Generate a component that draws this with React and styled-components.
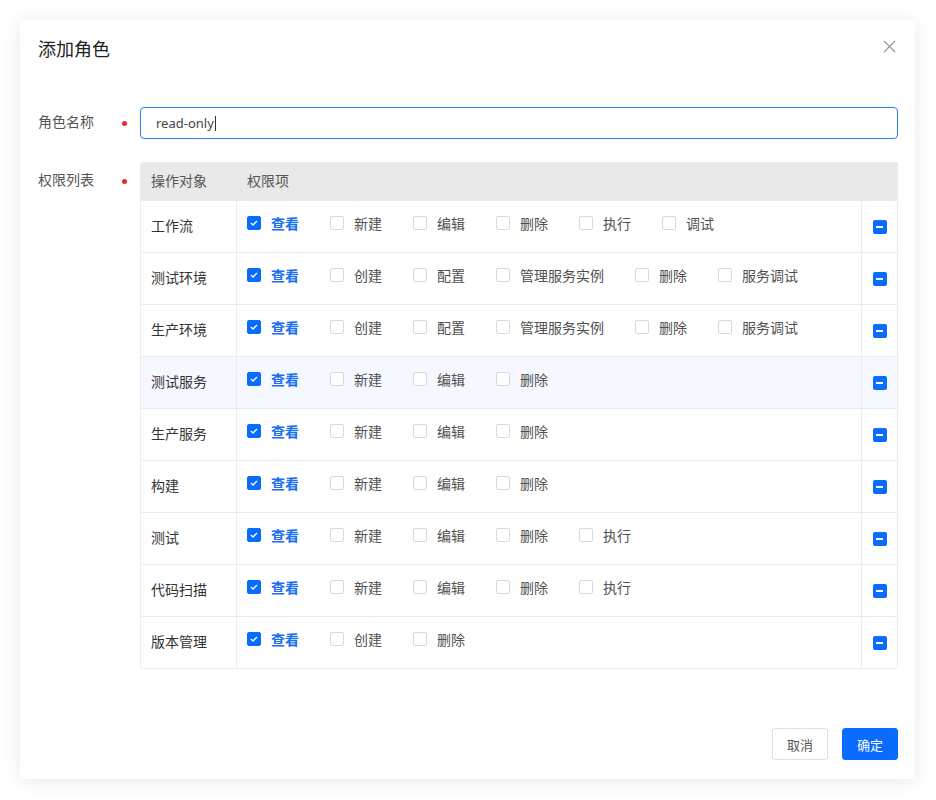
import React from "react";
import styled, { createGlobalStyle } from "styled-components";

const GlobalStyle = createGlobalStyle`
  body {
    margin: 0;
    background: #ffffff;
    font-family: "Noto Sans", "Noto Sans CJK SC", sans-serif;
    color: #333;
  }
`;

const BLUE = "#0a6cff";

const Page = styled.div`
  padding: 20px 21px 21px 20px;
`;

const Dialog = styled.div`
  height: 759px;
  background: #fff;
  box-shadow: 0 2px 18px rgba(0, 0, 0, 0.09);
  display: flex;
  flex-direction: column;
`;

const Header = styled.div`
  height: 56px;
  padding: 0 18px 2px;
  display: flex;
  align-items: center;
  justify-content: space-between;

  h2 {
    margin: 0;
    font-size: 18px;
    font-weight: 400;
    color: #222;
    font-family: "Noto Sans CJK SC", sans-serif;
  }
`;

const Close = styled.button`
  border: none;
  background: none;
  padding: 0;
  width: 14px;
  height: 14px;
  cursor: pointer;
  display: flex;
  margin-bottom: 3px;
  svg {
    display: block;
  }
`;

const Body = styled.div`
  flex: 1;
  padding: 29px 17px 0 18px;
  display: flex;
  flex-direction: column;
  gap: 23px;
`;

const FormRow = styled.div`
  display: flex;
  align-items: ${(p) => (p.$top ? "flex-start" : "center")};
`;

const Label = styled.div`
  width: 102px;
  flex-shrink: 0;
  position: relative;
  font-size: 14px;
  color: #555;
  font-family: "Noto Sans CJK SC", sans-serif;
  line-height: ${(p) => (p.$top ? "34px" : "20px")};
  padding-bottom: ${(p) => (p.$top ? "0" : "4px")};

  &::after {
    content: "";
    position: absolute;
    right: 13px;
    top: ${(p) => (p.$top ? "19px" : "12px")};
    width: 5px;
    height: 5px;
    margin-top: -2px;
    border-radius: 50%;
    background: #f5222d;
  }
`;

const InputBox = styled.div`
  flex: 1;
  height: 32px;
  box-sizing: border-box;
  border: 1px solid #2f7cf6;
  border-radius: 4px;
  padding: 0 15px;
  display: flex;
  align-items: center;
  font-size: 13px;
  color: #444;
`;

const Caret = styled.span`
  display: inline-block;
  width: 1px;
  height: 15px;
  background: #333;
  margin-left: 1px;
`;

const Table = styled.div`
  flex: 1;
  border: 1px solid #e8edf4;
  border-radius: 2px;
`;

const Row = styled.div`
  display: grid;
  grid-template-columns: 95px 1fr 36px;
  height: ${(p) => (p.$head ? "37px" : "51px")};
  background: ${(p) => (p.$head ? "#e9e9e9" : p.$hover ? "#f5f8ff" : "#fff")};
  & + & {
    border-top: 1px solid #e8edf4;
  }
`;

const Cell = styled.div`
  display: flex;
  align-items: center;
  padding: ${(p) => (p.$pad ? "0 0 4px 10px" : "0")};
  justify-content: ${(p) => (p.$center ? "center" : "flex-start")};
  font-size: 14px;
  color: ${(p) => (p.$head ? "#555" : "#333")};
  font-family: "Noto Sans CJK SC", sans-serif;
  & + & {
    border-left: 1px solid #e8edf4;
  }
`;

const Perms = styled.div`
  display: flex;
  align-items: center;
  padding: 0 0 8px 10px;
  height: 100%;
  box-sizing: border-box;
`;

const Item = styled.label`
  display: flex;
  align-items: center;
  gap: 10px;
  margin-right: 31px;
  font-size: 14px;
  color: ${(p) => (p.$on ? "#1a6ef0" : "#505050")};
  font-weight: ${(p) => (p.$on ? 600 : 400)};
  cursor: pointer;
`;

const Box = styled.span`
  width: 14px;
  height: 14px;
  box-sizing: border-box;
  border-radius: 2px;
  border: 1px solid ${(p) => (p.$on ? BLUE : "#d5d9e1")};
  background: ${(p) => (p.$on ? BLUE : "#fff")};
  display: flex;
  align-items: center;
  justify-content: center;
`;

const Remove = styled.button`
  width: 14px;
  height: 14px;
  padding: 0;
  border: none;
  border-radius: 2px;
  background: ${BLUE};
  display: flex;
  align-items: center;
  justify-content: center;
  cursor: pointer;

  &::before {
    content: "";
    width: 7px;
    height: 2px;
    background: #fff;
  }
`;

const Footer = styled.div`
  display: flex;
  justify-content: flex-end;
  gap: 14px;
  padding: 0 17px 19px;
`;

const Button = styled.button`
  width: 56px;
  height: 32px;
  border-radius: 3px;
  font-size: 13px;
  font-family: "Noto Sans CJK SC", sans-serif;
  cursor: pointer;
  border: 1px solid ${(p) => (p.$primary ? BLUE : "#dde1e8")};
  background: ${(p) => (p.$primary ? BLUE : "#fff")};
  color: ${(p) => (p.$primary ? "#fff" : "#555")};
`;

const rows = [
  ["工作流", ["查看", "新建", "编辑", "删除", "执行", "调试"]],
  ["测试环境", ["查看", "创建", "配置", "管理服务实例", "删除", "服务调试"]],
  ["生产环境", ["查看", "创建", "配置", "管理服务实例", "删除", "服务调试"]],
  ["测试服务", ["查看", "新建", "编辑", "删除"]],
  ["生产服务", ["查看", "新建", "编辑", "删除"]],
  ["构建", ["查看", "新建", "编辑", "删除"]],
  ["测试", ["查看", "新建", "编辑", "删除", "执行"]],
  ["代码扫描", ["查看", "新建", "编辑", "删除", "执行"]],
  ["版本管理", ["查看", "创建", "删除"]],
];

const Check = ({ on, children }) => (
  <Item $on={on}>
    <Box $on={on}>
      {on && (
        <svg width="8" height="6" viewBox="0 0 8 6">
          <path d="M1 3l2 2 4-4" fill="none" stroke="#fff" strokeWidth="1.3" />
        </svg>
      )}
    </Box>
    {children}
  </Item>
);

export default function App() {
  return (
    <>
      <GlobalStyle />
      <Page>
        <Dialog>
          <Header>
            <h2>添加角色</h2>
            <Close aria-label="close">
              <svg width="13" height="13" viewBox="0 0 13 13">
                <path d="M1 1l11 11M12 1L1 12" stroke="#999" strokeWidth="1.2" />
              </svg>
            </Close>
          </Header>
          <Body>
            <FormRow>
              <Label>角色名称</Label>
              <InputBox>
                read-only
                <Caret />
              </InputBox>
            </FormRow>
            <FormRow $top>
              <Label $top>权限列表</Label>
              <Table>
                <Row $head>
                  <Cell $pad $head>操作对象</Cell>
                  <Cell $pad $head>权限项</Cell>
                  <Cell />
                </Row>
                {rows.map(([name, perms], i) => (
                  <Row key={name} $hover={i === 3}>
                    <Cell $pad>{name}</Cell>
                    <Cell>
                      <Perms>
                        {perms.map((p, j) => (
                          <Check key={p} on={j === 0}>
                            {p}
                          </Check>
                        ))}
                      </Perms>
                    </Cell>
                    <Cell $center>
                      <Remove aria-label="remove" />
                    </Cell>
                  </Row>
                ))}
              </Table>
            </FormRow>
          </Body>
          <Footer>
            <Button>取消</Button>
            <Button $primary>确定</Button>
          </Footer>
        </Dialog>
      </Page>
    </>
  );
}
